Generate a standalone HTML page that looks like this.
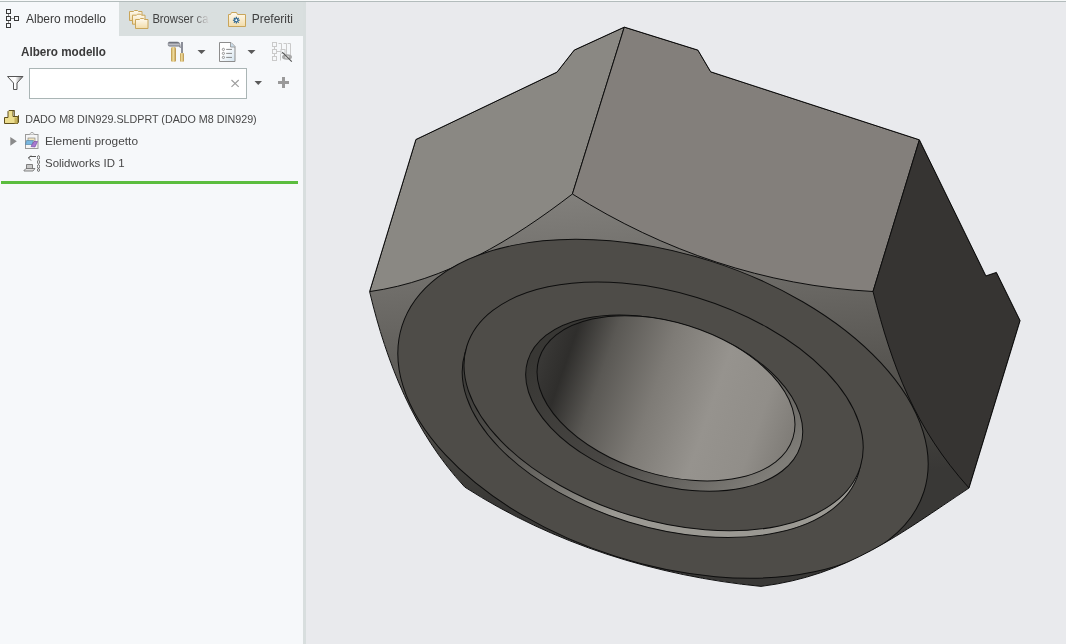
<!DOCTYPE html>
<html><head><meta charset="utf-8">
<style>
html,body{margin:0;padding:0;}
body{width:1066px;height:644px;overflow:hidden;position:relative;background:#e9eaed;font-family:"Liberation Sans",sans-serif;}
#topline{position:absolute;left:0;top:0;width:1066px;height:1px;background:#f7f9f9;}
#topline2{position:absolute;left:0;top:1px;width:1066px;height:1px;background:#b3bcbc;}
#panel{position:absolute;left:0;top:2px;width:303px;height:642px;background:#f6f8fa;}
#tabbar{position:absolute;left:119px;top:2px;width:184px;height:34px;background:#d9dfdf;}
#split{position:absolute;left:303px;top:2px;width:3px;height:642px;background:#d8dede;}
.t{position:absolute;white-space:nowrap;color:#333;font-size:12px;}
#green{position:absolute;left:1px;top:181px;width:297px;height:3px;background:#5bbd3e;}
#search0{position:absolute;left:29px;top:68px;width:216px;height:29px;border:1px solid #aab5b5;background:#fff;}
svg{position:absolute;left:0;top:0;}
</style></head><body>
<div id="topline"></div><div id="topline2"></div>
<div id="panel"></div>
<div id="tabbar"></div>
<div id="split"></div>
<div id="search0"></div><svg id="ui" width="310" height="190" viewBox="0 0 310 190" style="position:absolute;left:0;top:0;">
<defs>
<linearGradient id="gold" x1="0" y1="0" x2="1" y2="0"><stop offset="0" stop-color="#b8954a"/><stop offset="0.45" stop-color="#f3e0a0"/><stop offset="1" stop-color="#b38d45"/></linearGradient>
<linearGradient id="steel" x1="0" y1="0" x2="0" y2="1"><stop offset="0" stop-color="#5f626c"/><stop offset="0.45" stop-color="#c0c1c8"/><stop offset="1" stop-color="#4f525c"/></linearGradient>
<linearGradient id="fold" x1="0" y1="0" x2="0" y2="1"><stop offset="0" stop-color="#fffaf0"/><stop offset="1" stop-color="#f2dcaa"/></linearGradient>
<linearGradient id="doc" x1="0" y1="0" x2="1" y2="1"><stop offset="0.4" stop-color="#ffffff"/><stop offset="1" stop-color="#d3e3ee"/></linearGradient>
<linearGradient id="fun" x1="0" y1="0" x2="1" y2="0"><stop offset="0" stop-color="#f4f4f4"/><stop offset="0.5" stop-color="#ffffff"/><stop offset="1" stop-color="#777"/></linearGradient>
<linearGradient id="fadeTxt" x1="0" y1="0" x2="1" y2="0"><stop offset="0" stop-color="#3c4242"/><stop offset="0.75" stop-color="#3c4242"/><stop offset="0.85" stop-color="#8a9090"/><stop offset="1" stop-color="#d0d6d6"/></linearGradient>
</defs>
<!-- tree tab icon -->
<g fill="none" stroke="#3a3a3a" stroke-width="1">
<rect x="6.5" y="9.5" width="4" height="4"/><rect x="6.5" y="16.5" width="4" height="4"/><rect x="6.5" y="23.5" width="4" height="4"/><rect x="14.5" y="16.5" width="4" height="4"/>
</g>
<g stroke="#8a8a8a" stroke-width="1"><line x1="8.5" y1="14" x2="8.5" y2="16"/><line x1="8.5" y1="21" x2="8.5" y2="23"/><line x1="11" y1="18.5" x2="14" y2="18.5"/></g>
<!-- browser folders -->
<g stroke="#c9a55a" stroke-width="1">
<path d="M129.5,11.5 h4 l1,-1 h3 l1,1 h3.5 v9 h-12.5 z" fill="url(#fold)"/>
<path d="M132.5,15.2 h4 l1,-1 h3 l1,1 h3.5 v9 h-12.5 z" fill="url(#fold)"/>
<path d="M135.5,19.5 h4 l1,-1 h3 l1,1 h3.5 v9 h-12.5 z" fill="url(#fold)"/>
</g>
<!-- preferiti folder -->
<path d="M228.5,14.5 h2 l1,-2 h5 l1,2 h8 v12 h-17 z" fill="url(#fold)" stroke="#c9a55a" stroke-width="1"/>
<g stroke="#1d5b8c" stroke-width="1.1"><line x1="236.3" y1="16.8" x2="236.3" y2="23.6"/><line x1="232.9" y1="20.2" x2="239.7" y2="20.2"/><line x1="233.9" y1="17.8" x2="238.7" y2="22.6"/><line x1="238.7" y1="17.8" x2="233.9" y2="22.6"/></g>
<circle cx="236.3" cy="20.2" r="1.6" fill="#fff" stroke="#1d5b8c" stroke-width="1"/>
<!-- hammer -->
<rect x="171" y="47" width="5" height="14.7" rx="1.5" fill="url(#gold)"/>
<path d="M168.2,43.2 q0,-1.2 1.5,-1.2 h7.5 q2.3,0 2.8,2.2 l0.4,3.6 q-0.5,-1.2 -1.6,-1.6 h-9.1 q-1.5,0 -1.5,-1.2 z" fill="url(#steel)" stroke="#666a74" stroke-width="0.5"/>
<rect x="181" y="42" width="2" height="11" fill="#8b8e98"/>
<rect x="180" y="53" width="4" height="8.7" rx="1" fill="url(#gold)"/>
<path d="M197.5,50 h8 l-4,4 z" fill="#5a5a5a"/>
<!-- doc -->
<path d="M219.5,42.5 h11.5 l4,4 v15 h-15.5 z" fill="url(#doc)" stroke="#8d8d8d" stroke-width="1"/>
<path d="M230.5,42.5 v4.5 h4.5" fill="#c9dcea" stroke="#8d8d8d" stroke-width="0.8"/>
<g fill="none" stroke="#8a8a8a" stroke-width="0.9"><circle cx="223.4" cy="49.4" r="1.1"/><circle cx="223.4" cy="53.4" r="1.1"/><circle cx="223.4" cy="57.4" r="1.1"/></g>
<g stroke="#8a8a8a" stroke-width="1"><line x1="226.2" y1="49.4" x2="232" y2="49.4"/><line x1="226.2" y1="53.4" x2="232" y2="53.4"/><line x1="226.2" y1="57.4" x2="232" y2="57.4"/></g>
<path d="M247.5,50 h8 l-4,4 z" fill="#5a5a5a"/>
<!-- tree-eye disabled -->
<g fill="none" stroke="#cacaca" stroke-width="1">
<rect x="272.5" y="42.5" width="4" height="4"/><rect x="272.5" y="49.5" width="4" height="4"/><rect x="272.5" y="56.5" width="4" height="4"/><rect x="281" y="49.5" width="4" height="4"/>
<path d="M278.5,43.5 h3 v6 M283.5,43.5 h3 v14 M287.5,43.5 h3 v12"/>
<line x1="274.5" y1="46.5" x2="274.5" y2="49.5"/><line x1="274.5" y1="53.5" x2="274.5" y2="56.5"/><line x1="276.5" y1="51.5" x2="281" y2="51.5"/><line x1="280.5" y1="54" x2="280.5" y2="60.5"/>
</g>
<ellipse cx="287" cy="57" rx="5" ry="2.8" fill="#a9a9a9"/>
<ellipse cx="287" cy="57" rx="2" ry="1.6" fill="#e0e0e0"/>
<line x1="282.2" y1="52.1" x2="291.8" y2="61.7" stroke="#555" stroke-width="1.1"/>
<!-- filter -->
<path d="M7.5,76.5 h15.5 l-6,6.5 v6.5 h-3.5 v-6.5 z" fill="url(#fun)" stroke="#555" stroke-width="1"/>
<!-- x in search -->
<g stroke="#9b9b9b" stroke-width="1.1"><line x1="231.5" y1="80" x2="238.7" y2="86.8"/><line x1="238.7" y1="80" x2="231.5" y2="86.8"/></g>
<path d="M254.5,81 h7.5 l-3.75,4 z" fill="#5a5a5a"/>
<g fill="#9a9a9a"><rect x="278" y="81" width="11" height="3"/><rect x="282" y="77" width="3" height="11"/></g>
<!-- part icon -->
<path d="M4.5,117.5 h3.5 v-6 l1,-1 h5 l-1,1 v5 h4.5 l1,-1 v7 l-1,1 h-13 z" fill="#ecdd8e" stroke="#5e4e1c" stroke-width="1" stroke-linejoin="round"/>
<path d="M13.5,111.5 l1,-1 v6 M17.5,116.5 v7.5" fill="none" stroke="#5e4e1c" stroke-width="0.8"/>
<rect x="14.5" y="117.5" width="3" height="6" fill="#c6b25a"/>
<!-- expander -->
<path d="M10.3,137 v8.7 l6.5,-4.35 z" fill="#8a8a8a"/>
<!-- elementi icon -->
<rect x="25.5" y="134.5" width="12.5" height="14" fill="#f5f5f5" stroke="#9a9a9a" stroke-width="1"/>
<path d="M29.5,134.5 l1.5,-2 h2 l1.5,2" fill="#eee" stroke="#9a9a9a" stroke-width="0.8"/>
<rect x="28" y="138" width="7" height="5" fill="#f2e6c0" stroke="#777" stroke-width="0.6"/>
<path d="M26.5,140.5 h7 l-1.5,4 h-6.5 z" fill="#79b7e0" stroke="#4a7ca0" stroke-width="0.6"/>
<path d="M31,146.5 l3,-5 h3.5 l-2.5,5.5 z" fill="#a779d0" stroke="#6f3fa0" stroke-width="0.6"/>
<!-- solidworks icon -->
<g stroke="#555" stroke-width="1" fill="none">
<path d="M36,156.5 h-6 l-1.5,1.5"/><path d="M31,155.5 l-2.5,2.5 l2.5,2.5"/>
</g>
<path d="M26.5,164.5 h6 v5 h-6 z" fill="#c8c8c8" stroke="#666" stroke-width="0.8"/>
<path d="M24,170.5 l2,-2 h9 l-2,2.5 h-9 z" fill="#e0e0e0" stroke="#666" stroke-width="0.8"/>
<g fill="none" stroke="#666" stroke-width="0.9"><ellipse cx="38.5" cy="157.5" rx="1" ry="2"/><ellipse cx="38.5" cy="162" rx="1" ry="2"/><ellipse cx="38.5" cy="166.5" rx="1" ry="2"/><ellipse cx="38.5" cy="170" rx="1" ry="1.5"/></g>
<!-- tab labels -->
<g font-family="'Liberation Sans', sans-serif" font-size="12" style="filter:grayscale(1)">
<text x="26" y="22.8" fill="#3a3a3a">Albero modello</text>
<text x="152.4" y="22.7" fill="url(#fadeTxt)" textLength="56" lengthAdjust="spacingAndGlyphs">Browser ca</text>
<text x="251.7" y="22.7" fill="#3c4242">Preferiti</text>
<text x="21" y="55.7" fill="#3a3a3a" font-weight="bold" textLength="85" lengthAdjust="spacingAndGlyphs">Albero modello</text>
<text x="25.2" y="123.1" fill="#474747" font-size="11" textLength="231.5" lengthAdjust="spacingAndGlyphs">DADO M8 DIN929.SLDPRT (DADO M8 DIN929)</text>
<text x="45" y="145.2" fill="#474747" font-size="11.5" textLength="93" lengthAdjust="spacingAndGlyphs">Elementi progetto</text>
<text x="45" y="167.2" fill="#474747" font-size="11.5" textLength="79.5" lengthAdjust="spacingAndGlyphs">Solidworks ID 1</text>
</g>
</svg>
<div id="green"></div>
<svg id="nut" width="1066" height="644" viewBox="0 0 1066 644">
<defs>
<linearGradient id="gch" gradientUnits="userSpaceOnUse" x1="660" y1="190" x2="683.7" y2="489"><stop offset="0" stop-color="#817f7b"/><stop offset="0.35" stop-color="#6a6864"/><stop offset="0.7" stop-color="#53514d"/><stop offset="0.92" stop-color="#3e3d3a"/><stop offset="1" stop-color="#393836"/></linearGradient>
<linearGradient id="gbore" gradientUnits="userSpaceOnUse" x1="533.1" y1="393.7" x2="798.9" y2="402.9"><stop offset="0" stop-color="#3a3937"/><stop offset="0.04" stop-color="#353432"/><stop offset="0.1" stop-color="#2f2e2c"/><stop offset="0.24" stop-color="#5a5854"/><stop offset="0.45" stop-color="#7e7b76"/><stop offset="0.67" stop-color="#96938e"/><stop offset="0.86" stop-color="#918e89"/><stop offset="1" stop-color="#7f7c77"/></linearGradient>
<linearGradient id="gstep" gradientUnits="userSpaceOnUse" x1="560" y1="350" x2="760" y2="480"><stop offset="0" stop-color="#383734"/><stop offset="0.5" stop-color="#484643"/><stop offset="1" stop-color="#7f7d78"/></linearGradient>
<linearGradient id="gwall" gradientUnits="userSpaceOnUse" x1="490" y1="420" x2="640" y2="530"><stop offset="0" stop-color="#3f3e3b"/><stop offset="0.45" stop-color="#5a5854"/><stop offset="1" stop-color="#9b9993"/></linearGradient>
</defs>
<clipPath id="silclip"><path d="M624.3,27.1 L574.2,50.1 557.0,72.1 415.9,139.5 369.6,291.6 C386.5,362.9 414.1,432.5 464.8,487.1 C553.2,544.0 656.7,576.1 761.0,586.4 C847.4,575.5 900.2,533.7 969.0,488.0 L1020.1,320.6 996.4,272.4 985.9,275.9 919.4,139.8 710.7,71.8 697.9,50.1 Z"/></clipPath>
<g clip-path="url(#silclip)">
<path d="M624.3,27.1 L574.2,50.1 557.0,72.1 415.9,139.5 369.6,291.6 C386.5,362.9 414.1,432.5 464.8,487.1 C553.2,544.0 656.7,576.1 761.0,586.4 C847.4,575.5 900.2,533.7 969.0,488.0 L1020.1,320.6 996.4,272.4 985.9,275.9 919.4,139.8 710.7,71.8 697.9,50.1 Z" fill="url(#gch)"/>
<path d="M624.3,27.1 L574.2,50.1 557.0,72.1 415.9,139.5 369.6,291.6 C445.3,281.1 512.8,239.8 572.4,194.0 Z" fill="#8a8883" stroke="#0e0e0e" stroke-width="1.00"/>
<path d="M572.4,194.0 L624.3,27.1 697.9,50.1 710.7,71.8 919.4,139.8 873.0,291.5 C765.2,285.8 663.7,251.4 572.4,194.0 Z" fill="#837f7b" stroke="#0e0e0e" stroke-width="1.00"/>
<path d="M919.4,139.8 L985.9,275.9 996.4,272.4 1020.1,320.6 969.0,488.0 C914.8,427.6 892.7,368.3 873.0,291.5 Z" fill="#363432" stroke="#0e0e0e" stroke-width="1.00"/>
<ellipse cx="663.0" cy="408.7" rx="273.8" ry="155.1" transform="rotate(17.60 663.0 408.7)" fill="#4e4c48" stroke="#0e0e0e" stroke-width="1.00"/>
<ellipse cx="661.8" cy="413.0" rx="205.8" ry="113.9" transform="rotate(17.00 661.8 413.0)" fill="url(#gwall)" stroke="#0e0e0e" stroke-width="1.00"/>
<ellipse cx="663.6" cy="406.4" rx="205.8" ry="113.9" transform="rotate(17.00 663.6 406.4)" fill="#4e4c48" stroke="#0e0e0e" stroke-width="1.00"/>
<ellipse cx="664.2" cy="403.1" rx="142.9" ry="80.8" transform="rotate(17.30 664.2 403.1)" fill="url(#gstep)" stroke="#0e0e0e" stroke-width="1.00"/>
<ellipse cx="666.0" cy="398.3" rx="133.0" ry="76.0" transform="rotate(17.30 666.0 398.3)" fill="url(#gbore)" stroke="#0e0e0e" stroke-width="1.00"/>
</g>
<path d="M624.3,27.1 L574.2,50.1 557.0,72.1 415.9,139.5 369.6,291.6 C386.5,362.9 414.1,432.5 464.8,487.1 C553.2,544.0 656.7,576.1 761.0,586.4 C847.4,575.5 900.2,533.7 969.0,488.0 L1020.1,320.6 996.4,272.4 985.9,275.9 919.4,139.8 710.7,71.8 697.9,50.1 Z" fill="none" stroke="#0e0e0e" stroke-width="1.00" stroke-linejoin="round"/>
</svg>
</body></html>
